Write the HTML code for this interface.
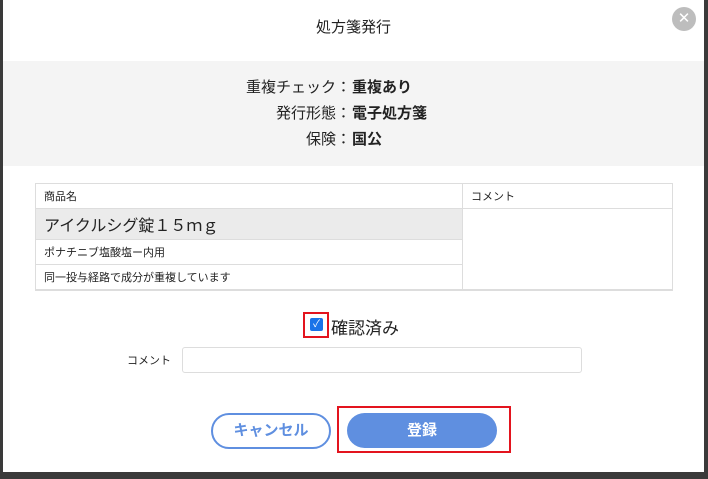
<!DOCTYPE html><html><head><meta charset="utf-8"><style>
body{margin:0;width:708px;height:479px;background:#3a3a3a;position:relative;overflow:hidden;font-family:"Liberation Sans","Noto Sans CJK JP",sans-serif;color:#222}
.m{position:absolute;left:3px;top:0;width:701px;height:472px;background:#fff}
.a{position:absolute}
.t{left:0;width:701px;top:16px;text-align:center;font-size:15px}
.g{left:0;top:61px;width:701px;height:105px;background:#f4f4f4}
.r{font-size:15px;position:absolute;left:0;width:701px}
.r span{position:absolute;right:353px}
.r b{position:absolute;left:349px}
table{border-collapse:collapse;position:absolute;left:32px;top:183px;width:638px;font-size:11px}
td{border:1px solid #ddd;padding:0 8px}
</style></head><body><div class="m">
<div class="a t">処方箋発行</div>
<div class="a" style="left:669px;top:7px;width:24px;height:24px;border-radius:50%;background:#bdbdbd;color:#fff;text-align:center;line-height:24px;font-size:15px">✕</div>
<div class="a g">
<div class="r" style="top:15px"><span>重複チェック：</span><b>重複あり</b></div>
<div class="r" style="top:41px"><span>発行形態：</span><b>電子処方箋</b></div>
<div class="r" style="top:67px"><span>保険：</span><b>国公</b></div>
</div>
<table>
<tr style="height:25px"><td style="width:410px">商品名</td><td>コメント</td></tr>
<tr style="height:31px"><td style="background:#ebebeb;font-size:16px">アイクルシグ錠１５ｍｇ</td><td rowspan="3" style="border-bottom:2px solid #ddd"></td></tr>
<tr style="height:25px"><td>ポナチニブ塩酸塩ー内用</td></tr>
<tr style="height:25px"><td style="border-bottom:2px solid #ddd">同一投与経路で成分が重複しています</td></tr>
</table>
<div class="a" style="left:300px;top:312px;width:22px;height:22px;border:2px solid #e3141e"></div>
<div class="a" style="left:307px;top:318px;width:13px;height:13px;background:#1a73e8;border-radius:2px;color:#fff;font-size:10px;text-align:center;line-height:13px">✓</div>
<div class="a" style="left:328px;top:314px;font-size:17px">確認済み</div>
<div class="a" style="left:124px;top:352px;font-size:11px">コメント</div>
<div class="a" style="left:179px;top:347px;width:398px;height:24px;border:1px solid #ddd;border-radius:3px"></div>
<div class="a" style="left:208px;top:413px;width:116px;height:32px;border:2px solid #5f8fe0;border-radius:18px;color:#5f8fe0;font-weight:bold;font-size:15px;text-align:center;line-height:32px">キャンセル</div>
<div class="a" style="left:334px;top:406px;width:170px;height:43px;border:2px solid #e3141e"></div>
<div class="a" style="left:344px;top:413px;width:150px;height:35px;background:#5f8fe0;border-radius:18px;color:#fff;font-weight:bold;font-size:15px;text-align:center;line-height:35px">登録</div>
</div></body></html>
